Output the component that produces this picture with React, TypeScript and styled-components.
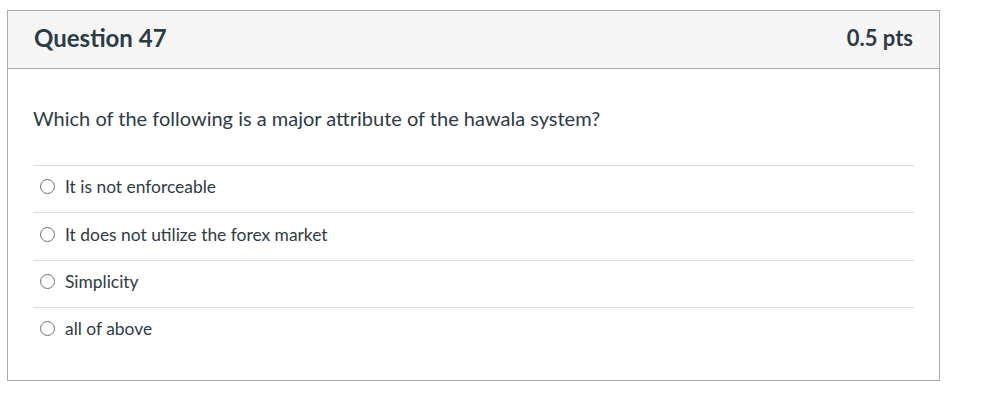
import styled, { createGlobalStyle } from 'styled-components';

const GlobalStyle = createGlobalStyle`
  body {
    margin: 0;
    background: #fff;
    font-family: Lato, 'Open Sans', sans-serif;
    color: #2d3b45;
  }
`;

const Page = styled.div`
  padding: 10px 0 0 7px;
`;

const Card = styled.div`
  width: 933px;
  box-sizing: border-box;
  border: 1px solid #aaaaaa;
`;

const Header = styled.div`
  height: 58px;
  box-sizing: border-box;
  background: #f5f5f5;
  border-bottom: 1px solid #aaaaaa;
  display: flex;
  align-items: center;
  justify-content: space-between;
  padding: 0 26px 5px;
`;

const Title = styled.h2`
  margin: 0;
  font-size: 24px;
  font-weight: 700;
  color: #2d3b45;
`;

const Points = styled.span`
  font-size: 22px;
  font-weight: 700;
  color: #2d3b45;
`;

const Body = styled.div`
  padding: 35px 25px 25px;
`;

const Prompt = styled.p`
  margin: 0 0 33px;
  font-size: 20px;
  font-weight: 400;
  line-height: 28px;
`;

const Answer = styled.label`
  display: flex;
  align-items: center;
  gap: 10px;
  height: 47.4px;
  box-sizing: border-box;
  border-top: 1px solid #dddddd;
  padding: 0 0 5px 7px;
  font-size: 17.4px;
  font-weight: 400;
  line-height: 25px;
  color: #2d3b45;
`;

const Radio = styled.span`
  width: 15px;
  height: 15px;
  box-sizing: border-box;
  border: 1px solid #6f6f6f;
  border-radius: 50%;
  flex-shrink: 0;
`;

const answers = [
  'It is not enforceable',
  'It does not utilize the forex market',
  'Simplicity',
  'all of above',
];

export default function App() {
  return (
    <Page>
      <GlobalStyle />
      <Card>
        <Header>
          <Title>Question 47</Title>
          <Points>0.5 pts</Points>
        </Header>
        <Body>
          <Prompt>Which of the following is a major attribute of the hawala system?</Prompt>
          {answers.map((a) => (
            <Answer key={a}>
              <Radio />
              {a}
            </Answer>
          ))}
        </Body>
      </Card>
    </Page>
  );
}
